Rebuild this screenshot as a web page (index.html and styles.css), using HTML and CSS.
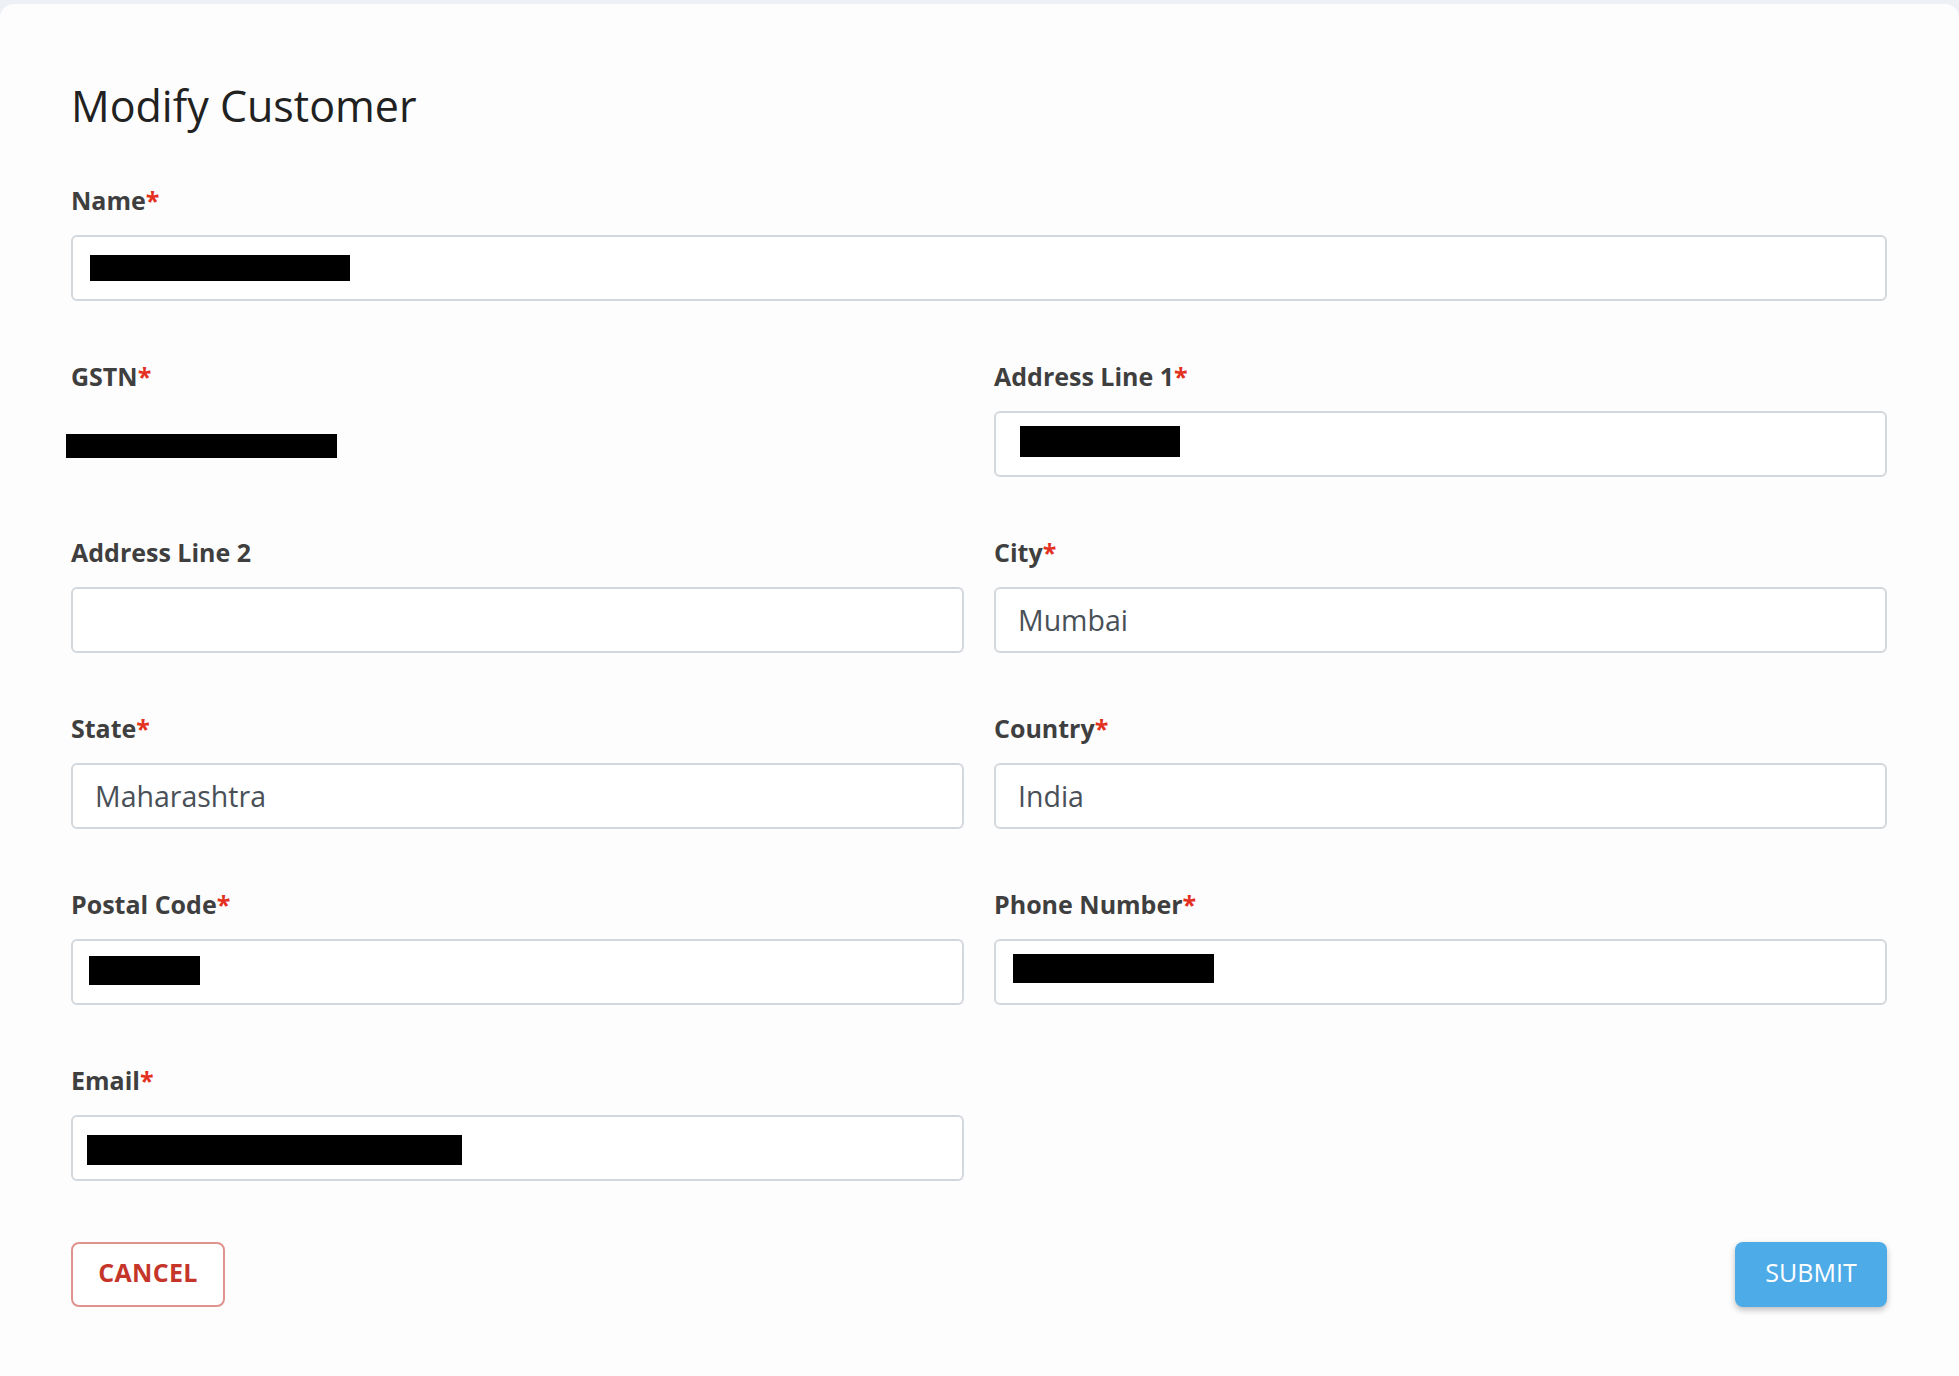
FILE: index.html
```html
<!DOCTYPE html>
<html lang="en">
<head>
<meta charset="utf-8">
<title>Modify Customer</title>
<link rel="stylesheet" href="styles.css">
</head>
<body>
<div class="card">
  <h2 class="title">Modify Customer</h2>
  <form class="form-grid">
    <div class="field span-2">
      <label class="label">Name<span class="req">*</span></label>
      <div class="box"><span class="redact r-name"></span></div>
    </div>
    <div class="field">
      <label class="label">GSTN<span class="req">*</span></label>
      <div class="static-value"><span class="redact r-gstn"></span></div>
    </div>
    <div class="field">
      <label class="label">Address Line 1<span class="req">*</span></label>
      <div class="box"><span class="redact r-addr1"></span></div>
    </div>
    <div class="field">
      <label class="label">Address Line 2</label>
      <div class="box"></div>
    </div>
    <div class="field">
      <label class="label">City<span class="req">*</span></label>
      <div class="box"><span class="value">Mumbai</span></div>
    </div>
    <div class="field">
      <label class="label">State<span class="req">*</span></label>
      <div class="box"><span class="value">Maharashtra</span></div>
    </div>
    <div class="field">
      <label class="label">Country<span class="req">*</span></label>
      <div class="box"><span class="value">India</span></div>
    </div>
    <div class="field">
      <label class="label">Postal Code<span class="req">*</span></label>
      <div class="box"><span class="redact r-postal"></span></div>
    </div>
    <div class="field">
      <label class="label">Phone Number<span class="req">*</span></label>
      <div class="box"><span class="redact r-phone"></span></div>
    </div>
    <div class="field">
      <label class="label">Email<span class="req">*</span></label>
      <div class="box"><span class="redact r-email"></span></div>
    </div>
  </form>
  <div class="actions">
    <button type="button" class="btn btn-cancel">CANCEL</button>
    <button type="button" class="btn btn-submit">SUBMIT</button>
  </div>
</div>
</body>
</html>
```

FILE: styles.css
```css
* {
  box-sizing: border-box;
}

html, body {
  margin: 0;
  padding: 0;
}

body {
  background: #edf0f5;
  font-family: "Open Sans", "Liberation Sans", sans-serif;
  color: #222;
}

.card {
  margin-top: 4px;
  background: #fdfdfd;
  border-radius: 14px 14px 0 0;
  min-height: 1372px;
  padding: 73px 72px 0 71px;
}

.title {
  margin: 0 0 47px 0;
  font-size: 43px;
  line-height: 58px;
  font-weight: 400;
  color: #212121;
}

.form-grid {
  display: grid;
  grid-template-columns: 1fr 1fr;
  column-gap: 30px;
  row-gap: 57px;
  margin: 0;
}

.span-2 {
  grid-column: 1 / span 2;
}

.field {
  display: flex;
  flex-direction: column;
}

.label {
  display: block;
  font-size: 25px;
  line-height: 36px;
  font-weight: 700;
  color: #3f3f3f;
  margin-bottom: 17px;
}

.req {
  color: #e3301f;
}

.box {
  height: 66px;
  border: 2px solid #d3d8dd;
  border-radius: 6px;
  background: #fff;
  padding: 0 22px;
  display: flex;
  align-items: center;
}

.value {
  font-size: 28.5px;
  line-height: 38px;
  color: #495057;
}

.static-value {
  height: 66px;
  display: flex;
  align-items: center;
  padding-top: 4px;
}

.redact {
  display: block;
  background: #000;
}

.r-name {
  width: 260px;
  height: 26px;
  margin-left: -5px;
}

.r-gstn {
  width: 271px;
  height: 24px;
  margin-left: -5px;
}

.r-addr1 {
  width: 160px;
  height: 31px;
  margin-left: 2px;
  margin-bottom: 5px;
}

.r-postal {
  width: 111px;
  height: 29px;
  margin-left: -6px;
  margin-bottom: 3px;
}

.r-phone {
  width: 201px;
  height: 29px;
  margin-left: -5px;
  margin-bottom: 8px;
}

.r-email {
  width: 375px;
  height: 30px;
  margin-left: -8px;
  margin-top: 3px;
}

.actions {
  display: flex;
  justify-content: space-between;
  align-items: center;
  margin-top: 61px;
}

.btn {
  height: 65px;
  font-family: "Open Sans", "Liberation Sans", sans-serif;
  font-size: 25px;
  line-height: 34px;
  border-radius: 8px;
  display: inline-flex;
  align-items: center;
  justify-content: center;
  padding: 0 0 5px 0;
  cursor: pointer;
}

.btn-cancel {
  width: 154px;
  background: #fff;
  border: 2px solid #e0938d;
  color: #c5352a;
  font-weight: 700;
  letter-spacing: 0.3px;
}

.btn-submit {
  width: 152px;
  background: #4dabe8;
  border: none;
  color: #fff;
  font-weight: 400;
  box-shadow: 0 3px 6px rgba(0, 0, 0, 0.25);
}
```
